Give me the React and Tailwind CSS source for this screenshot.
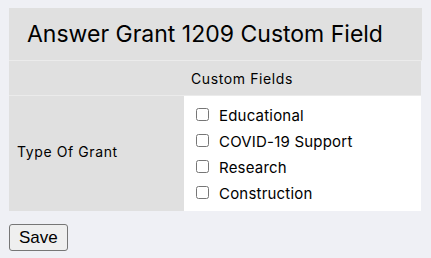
const OPTIONS = ['Educational', 'COVID-19 Support', 'Research', 'Construction']

export default function App() {
  return (
    <div className="min-h-[258px] bg-[#eff0f5] pt-2 px-[9px] font-['Inter',sans-serif] text-black">
      <div className="w-[413px]">
        {/* Title */}
        <div className="h-[53px] bg-[#e0e0e0] border-b border-[#ebebeb] pl-[18px] flex items-center">
          <h1 className="text-[23px] leading-none">Answer Grant 1209 Custom Field</h1>
        </div>

        {/* Header row */}
        <div className="w-[412px] grid grid-cols-[175px_1fr] h-[35px] bg-[#e0e0e0] border-b border-[#ebebeb]">
          <div />
          <div className="flex items-center pl-[7px] text-[14px] tracking-[0.6px]">Custom Fields</div>
        </div>

        {/* Body row */}
        <div className="w-[412px] grid grid-cols-[175px_1fr] h-[115px]">
          <div className="bg-[#e0e0e0] flex items-center pl-2 pb-1 text-[14px] tracking-[0.6px]">Type Of Grant</div>
          <div className="bg-white flex flex-col justify-center pl-3 pt-[4px]">
            {OPTIONS.map((o) => (
              <label key={o} className="flex items-center h-[26px] text-[15px] tracking-[0.2px]">
                <input type="checkbox" className="w-[13px] h-[13px] m-0 mr-[10px] -translate-y-[2px]" />
                {o}
              </label>
            ))}
          </div>
        </div>
      </div>

      <button className="mt-[13px] h-[27px] px-[9px] rounded-[3px] border border-[#767676] bg-[#efefef] font-['Liberation_Sans',Arial,sans-serif] text-[17px] leading-none">
        Save
      </button>
    </div>
  )
}
